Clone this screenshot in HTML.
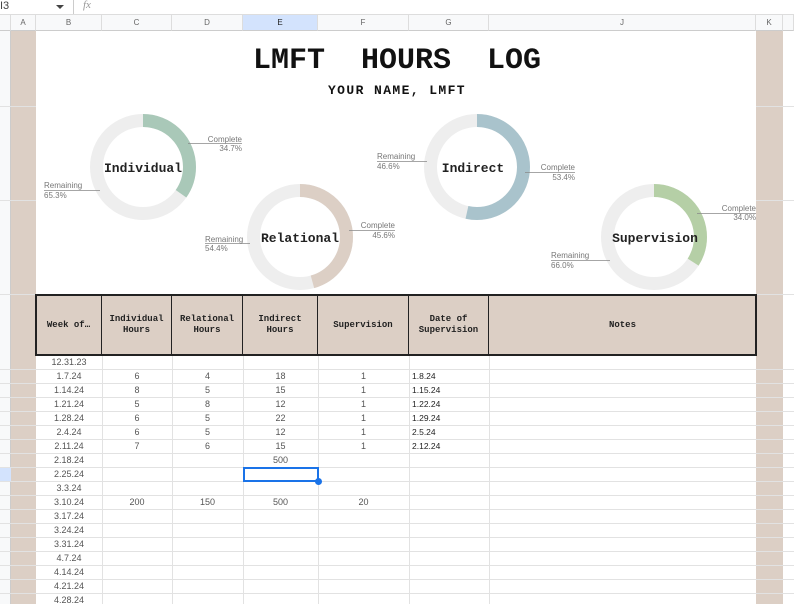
<!DOCTYPE html>
<html><head><meta charset="utf-8"><style>
*{margin:0;padding:0;box-sizing:border-box}
body{width:794px;height:604px;overflow:hidden;background:#fff;position:relative;font-family:"Liberation Sans",sans-serif}
.a{position:absolute}
.hl{position:absolute;height:1px;background:#e2e2e2}
.vl{position:absolute;width:1px;background:#e2e2e2}
.ch{position:absolute;top:15px;height:16px;font-size:8px;color:#666;text-align:center;line-height:16px;border-right:1px solid #ddd;background:#f8f9fa;border-bottom:1px solid #ccc}
.mono{font-family:"Liberation Mono",monospace;font-weight:bold}
.th{position:absolute;top:295px;height:60px;display:flex;align-items:center;justify-content:center;text-align:center;font-family:"Liberation Mono",monospace;font-weight:bold;font-size:9px;line-height:11px;color:#222;border-right:1px solid #222}
.lbl{position:absolute;font-size:8px;color:#777;line-height:9px}
.d{position:absolute;font-size:9px;color:#555;text-align:center;line-height:14px;height:14px}
</style></head><body>
<!-- formula bar -->
<div class="a" style="left:0;top:0;width:794px;height:15px;background:#fff;border-bottom:1px solid #ddd"></div>
<div class="a" style="left:0;top:0;font-size:11px;color:#444;line-height:12px">I3</div>
<div class="a" style="left:56px;top:5px;width:0;height:0;border-left:4px solid transparent;border-right:4px solid transparent;border-top:4px solid #444"></div>
<div class="a" style="left:73px;top:0;width:1px;height:14px;background:#ccc"></div>
<div class="a" style="left:83px;top:-1px;font-size:11px;color:#999;font-style:italic;font-family:'Liberation Serif',serif">fx</div>
<!-- column headers -->
<div class="ch" style="left:0;width:11px"></div>
<div class="ch" style="left:11px;width:25px">A</div>
<div class="ch" style="left:36px;width:66px">B</div>
<div class="ch" style="left:102px;width:70px">C</div>
<div class="ch" style="left:172px;width:71px">D</div>
<div class="ch" style="left:243px;width:75px;background:#d3e3fd;color:#222">E</div>
<div class="ch" style="left:318px;width:91px">F</div>
<div class="ch" style="left:409px;width:80px">G</div>
<div class="ch" style="left:489px;width:267px">J</div>
<div class="ch" style="left:756px;width:27px">K</div>
<div class="ch" style="left:783px;width:11px"></div>
<!-- row header col -->
<div class="a" style="left:0;top:31px;width:11px;height:573px;background:#f8f9fa;border-right:1px solid #ccc"></div>
<div class="a" style="left:0;top:467px;width:11px;height:14px;background:#d3e3fd"></div>
<!-- beige columns -->
<div class="a" style="left:11px;top:31px;width:25px;height:573px;background:#dccfc5"></div>
<div class="a" style="left:756px;top:31px;width:27px;height:573px;background:#dccfc5"></div>
<!-- upper grid lines -->
<div class="hl" style="left:0;top:106px;width:36px"></div>
<div class="hl" style="left:756px;top:106px;width:38px"></div>
<div class="hl" style="left:0;top:200px;width:36px"></div>
<div class="hl" style="left:756px;top:200px;width:38px"></div>
<div class="hl" style="left:0;top:294px;width:36px"></div>
<div class="hl" style="left:756px;top:294px;width:38px"></div>
<!-- title -->
<div class="a mono" style="left:0;width:794px;top:44px;text-align:center;font-size:30px;line-height:34px;color:#111;white-space:pre">LMFT  HOURS  LOG</div>
<div class="a mono" style="left:0;width:794px;top:83px;text-align:center;font-size:13px;line-height:16px;color:#111;letter-spacing:1.4px">YOUR NAME, LMFT</div>
<!-- donuts -->
<svg class="a" style="left:0;top:0" width="794" height="604">
<g fill="none" stroke-width="13">
<circle cx="143" cy="167" r="46.5" stroke="#eeeeee"/>
<circle cx="143" cy="167" r="46.5" stroke="#a9c8b8" stroke-dasharray="101.4 400" transform="rotate(-90 143 167)"/>
<circle cx="300" cy="237" r="46.5" stroke="#eeeeee"/>
<circle cx="300" cy="237" r="46.5" stroke="#dccfc5" stroke-dasharray="133.2 400" transform="rotate(-90 300 237)"/>
<circle cx="477" cy="167" r="46.5" stroke="#eeeeee"/>
<circle cx="477" cy="167" r="46.5" stroke="#a9c3cc" stroke-dasharray="156 400" transform="rotate(-90 477 167)"/>
<circle cx="654" cy="237" r="46.5" stroke="#eeeeee"/>
<circle cx="654" cy="237" r="46.5" stroke="#b5cfa6" stroke-dasharray="99.4 400" transform="rotate(-90 654 237)"/>
</g>
<g stroke="#888" stroke-width="0.8">
<line x1="188" y1="143.5" x2="242" y2="143.5"/>
<line x1="44" y1="190.5" x2="100" y2="190.5"/>
<line x1="205" y1="243.5" x2="250" y2="243.5"/>
<line x1="349" y1="230.5" x2="395" y2="230.5"/>
<line x1="377" y1="161.5" x2="427" y2="161.5"/>
<line x1="525" y1="172.5" x2="575" y2="172.5"/>
<line x1="697" y1="213.5" x2="756" y2="213.5"/>
<line x1="551" y1="260.5" x2="610" y2="260.5"/>
</g>
<g font-family="Liberation Mono, monospace" font-weight="bold" font-size="13" fill="#222" text-anchor="middle">
<text x="143" y="172">Individual</text>
<text x="300" y="242">Relational</text>
<text x="473" y="172">Indirect</text>
<text x="655" y="242">Supervision</text>
</g>
<g font-family="Liberation Sans, sans-serif" font-size="8" fill="#777">
<text x="242" y="142" text-anchor="end">Complete</text><text x="242" y="151" text-anchor="end">34.7%</text>
<text x="44" y="188">Remaining</text><text x="44" y="198">65.3%</text>
<text x="205" y="242">Remaining</text><text x="205" y="251">54.4%</text>
<text x="395" y="228" text-anchor="end">Complete</text><text x="395" y="238" text-anchor="end">45.6%</text>
<text x="377" y="159">Remaining</text><text x="377" y="169">46.6%</text>
<text x="575" y="170" text-anchor="end">Complete</text><text x="575" y="180" text-anchor="end">53.4%</text>
<text x="756" y="211" text-anchor="end">Complete</text><text x="756" y="220" text-anchor="end">34.0%</text>
<text x="551" y="258">Remaining</text><text x="551" y="268">66.0%</text>
</g>
</svg>
<!-- table header -->
<div class="a" style="left:36px;top:295px;width:720px;height:60px;background:#dccfc5"></div>
<div class="th" style="left:36px;width:66px">Week of…</div>
<div class="th" style="left:102px;width:70px">Individual<br>Hours</div>
<div class="th" style="left:172px;width:71px">Relational<br>Hours</div>
<div class="th" style="left:243px;width:75px">Indirect<br>Hours</div>
<div class="th" style="left:318px;width:91px">Supervision</div>
<div class="th" style="left:409px;width:80px">Date of<br>Supervision</div>
<div class="th" style="left:489px;width:267px;border-right:none">Notes</div>
<div class="a" style="left:35px;top:294px;width:722px;height:62px;border:2px solid #222"></div>
<!-- grid lines body -->
<div class="vl" style="left:102px;top:356px;height:248px"></div>
<div class="vl" style="left:172px;top:356px;height:248px"></div>
<div class="vl" style="left:243px;top:356px;height:248px"></div>
<div class="vl" style="left:318px;top:356px;height:248px"></div>
<div class="vl" style="left:409px;top:356px;height:248px"></div>
<div class="vl" style="left:489px;top:356px;height:248px"></div>
<div class="hl" style="left:0;top:369px;width:794px"></div>
<div class="hl" style="left:0;top:383px;width:794px"></div>
<div class="hl" style="left:0;top:397px;width:794px"></div>
<div class="hl" style="left:0;top:411px;width:794px"></div>
<div class="hl" style="left:0;top:425px;width:794px"></div>
<div class="hl" style="left:0;top:439px;width:794px"></div>
<div class="hl" style="left:0;top:453px;width:794px"></div>
<div class="hl" style="left:0;top:467px;width:794px"></div>
<div class="hl" style="left:0;top:481px;width:794px"></div>
<div class="hl" style="left:0;top:495px;width:794px"></div>
<div class="hl" style="left:0;top:509px;width:794px"></div>
<div class="hl" style="left:0;top:523px;width:794px"></div>
<div class="hl" style="left:0;top:537px;width:794px"></div>
<div class="hl" style="left:0;top:551px;width:794px"></div>
<div class="hl" style="left:0;top:565px;width:794px"></div>
<div class="hl" style="left:0;top:579px;width:794px"></div>
<div class="hl" style="left:0;top:593px;width:794px"></div>
<!-- dates -->
<div class="d" style="left:36px;width:66px;top:355px">12.31.23</div>
<div class="d" style="left:36px;width:66px;top:369px">1.7.24</div>
<div class="d" style="left:36px;width:66px;top:383px">1.14.24</div>
<div class="d" style="left:36px;width:66px;top:397px">1.21.24</div>
<div class="d" style="left:36px;width:66px;top:411px">1.28.24</div>
<div class="d" style="left:36px;width:66px;top:425px">2.4.24</div>
<div class="d" style="left:36px;width:66px;top:439px">2.11.24</div>
<div class="d" style="left:36px;width:66px;top:453px">2.18.24</div>
<div class="d" style="left:36px;width:66px;top:467px">2.25.24</div>
<div class="d" style="left:36px;width:66px;top:481px">3.3.24</div>
<div class="d" style="left:36px;width:66px;top:495px">3.10.24</div>
<div class="d" style="left:36px;width:66px;top:509px">3.17.24</div>
<div class="d" style="left:36px;width:66px;top:523px">3.24.24</div>
<div class="d" style="left:36px;width:66px;top:537px">3.31.24</div>
<div class="d" style="left:36px;width:66px;top:551px">4.7.24</div>
<div class="d" style="left:36px;width:66px;top:565px">4.14.24</div>
<div class="d" style="left:36px;width:66px;top:579px">4.21.24</div>
<div class="d" style="left:36px;width:66px;top:593px">4.28.24</div>
<!-- data -->
<div class="d" style="left:102px;width:70px;top:369px">6</div><div class="d" style="left:172px;width:71px;top:369px">4</div><div class="d" style="left:243px;width:75px;top:369px">18</div><div class="d" style="left:318px;width:91px;top:369px">1</div>
<div class="d" style="left:102px;width:70px;top:383px">8</div><div class="d" style="left:172px;width:71px;top:383px">5</div><div class="d" style="left:243px;width:75px;top:383px">15</div><div class="d" style="left:318px;width:91px;top:383px">1</div>
<div class="d" style="left:102px;width:70px;top:397px">5</div><div class="d" style="left:172px;width:71px;top:397px">8</div><div class="d" style="left:243px;width:75px;top:397px">12</div><div class="d" style="left:318px;width:91px;top:397px">1</div>
<div class="d" style="left:102px;width:70px;top:411px">6</div><div class="d" style="left:172px;width:71px;top:411px">5</div><div class="d" style="left:243px;width:75px;top:411px">22</div><div class="d" style="left:318px;width:91px;top:411px">1</div>
<div class="d" style="left:102px;width:70px;top:425px">6</div><div class="d" style="left:172px;width:71px;top:425px">5</div><div class="d" style="left:243px;width:75px;top:425px">12</div><div class="d" style="left:318px;width:91px;top:425px">1</div>
<div class="d" style="left:102px;width:70px;top:439px">7</div><div class="d" style="left:172px;width:71px;top:439px">6</div><div class="d" style="left:243px;width:75px;top:439px">15</div><div class="d" style="left:318px;width:91px;top:439px">1</div>
<div class="d" style="left:243px;width:75px;top:453px">500</div>
<div class="d" style="left:102px;width:70px;top:495px">200</div><div class="d" style="left:172px;width:71px;top:495px">150</div><div class="d" style="left:243px;width:75px;top:495px">500</div><div class="d" style="left:318px;width:91px;top:495px">20</div>
<div class="d" style="left:412px;top:369px;color:#222;font-size:8.5px">1.8.24</div>
<div class="d" style="left:412px;top:383px;color:#222;font-size:8.5px">1.15.24</div>
<div class="d" style="left:412px;top:397px;color:#222;font-size:8.5px">1.22.24</div>
<div class="d" style="left:412px;top:411px;color:#222;font-size:8.5px">1.29.24</div>
<div class="d" style="left:412px;top:425px;color:#222;font-size:8.5px">2.5.24</div>
<div class="d" style="left:412px;top:439px;color:#222;font-size:8.5px">2.12.24</div>
<!-- selection -->
<div class="a" style="left:243px;top:467px;width:76px;height:15px;border:2px solid #1a73e8"></div>
<div class="a" style="left:315px;top:478px;width:7px;height:7px;border-radius:50%;background:#1a73e8"></div>
</body></html>
